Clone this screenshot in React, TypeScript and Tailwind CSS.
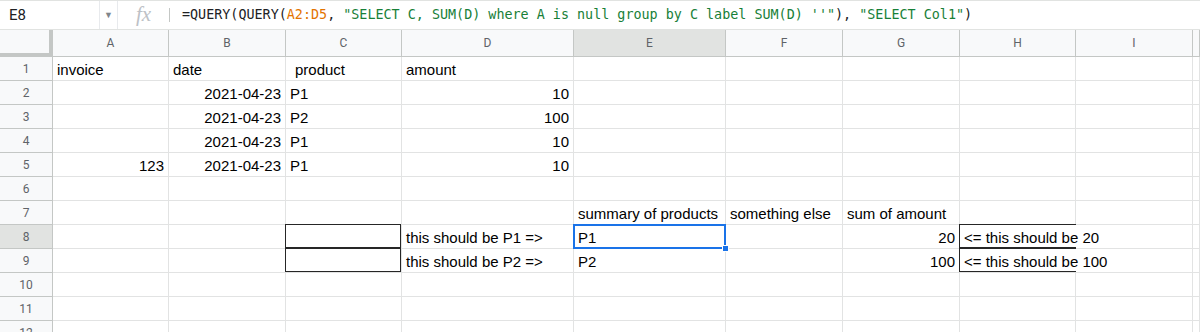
import React from 'react';

type Cell = {
  text?: string;
  right?: boolean;
  indent?: boolean;
  box?: boolean;
  openBox?: boolean;
  selected?: boolean;
};

const COLS = ['A', 'B', 'C', 'D', 'E', 'F', 'G', 'H', 'I', ''];
const DATE = '2021-04-23';

// row number -> column index -> cell
const DATA: Record<number, Record<number, Cell>> = {
  1: { 0: { text: 'invoice' }, 1: { text: 'date' }, 2: { text: 'product', indent: true }, 3: { text: 'amount' } },
  2: { 1: { text: DATE, right: true }, 2: { text: 'P1' }, 3: { text: '10', right: true } },
  3: { 1: { text: DATE, right: true }, 2: { text: 'P2' }, 3: { text: '100', right: true } },
  4: { 1: { text: DATE, right: true }, 2: { text: 'P1' }, 3: { text: '10', right: true } },
  5: { 0: { text: '123', right: true }, 1: { text: DATE, right: true }, 2: { text: 'P1' }, 3: { text: '10', right: true } },
  7: { 4: { text: 'summary of products' }, 5: { text: 'something else' }, 6: { text: 'sum of amount' } },
  8: {
    2: { box: true },
    3: { text: 'this should be P1 =>' },
    4: { text: 'P1', selected: true },
    6: { text: '20', right: true },
    7: { text: '<= this should be 20', openBox: true },
  },
  9: {
    2: { box: true },
    3: { text: 'this should be P2 =>' },
    4: { text: 'P2' },
    6: { text: '100', right: true },
    7: { text: '<= this should be 100', openBox: true },
  },
};

const ROWS = Array.from({ length: 12 }, (_, i) => i + 1);

function FormulaBar() {
  return (
    <div className="flex h-[30px] items-center border-t border-b border-[#e1e3e1] bg-white">
      <div className="flex h-full w-[100px] items-center border-r border-[#e8eaed] pl-[9px] font-['Roboto'] text-[15px] text-[#202124]">
        E8
      </div>
      <div className="flex h-full w-[18px] items-center justify-center border-r border-[#e8eaed] text-[9px] text-[#80868b]">
        ▼
      </div>
      <div className="flex h-full w-[51px] items-center justify-center font-['Liberation_Serif'] text-[21px] italic text-[#bdc1c6]">
        fx
      </div>
      <div className="h-[14px] w-px bg-[#c4c7c5]" />
      <div className="whitespace-pre pl-[12px] font-['DejaVu_Sans_Mono'] text-[13.4px] text-[#202124]">
        =QUERY(QUERY(<span className="text-[#e37400]">A2:D5</span>,{' '}
        <span className="text-[#188038]">"SELECT C, SUM(D) where A is null group by C label SUM(D) ''"</span>),{' '}
        <span className="text-[#188038]">"SELECT Col1"</span>)
      </div>
    </div>
  );
}

function DataCell({ cell }: { cell?: Cell }) {
  const noRight = cell?.openBox;
  return (
    <div
      className={`relative flex h-[24px] items-end border-b border-[#e2e3e3] pb-[2px] ${
        noRight ? '' : 'border-r'
      } ${cell?.right ? 'justify-end pr-[4px]' : cell?.indent ? 'pl-[9px]' : 'pl-[4px]'}`}
    >
      {cell?.text && (
        <span className="relative z-10 whitespace-nowrap font-['Liberation_Sans'] text-[15px] leading-[17px] text-black">
          {cell.text}
        </span>
      )}
      {cell?.box && <div className="absolute -left-px -top-px right-0 bottom-0 border border-[#262626]" />}
      {cell?.openBox && (
        <div className="absolute -left-px -top-px right-0 bottom-0 border-t border-l border-b border-[#262626]" />
      )}
      {cell?.selected && (
        <>
          <div className="absolute -left-px -top-px -right-px -bottom-px z-20 border-2 border-[#1a73e8]" />
          <div className="absolute -right-[4px] -bottom-[4px] z-30 h-[7px] w-[7px] border border-white bg-[#1a73e8]" />
        </>
      )}
    </div>
  );
}

export default function App() {
  return (
    <div className="h-[332px] w-[1200px] overflow-hidden bg-white">
      <FormulaBar />
      <div className="grid grid-cols-[53px_116px_117px_116px_172px_152px_117px_117px_116px_117px_1fr]">
        {/* header row */}
        <div className="h-[27px] border-r-4 border-b-4 border-[#c4c7c5] bg-[#f8f9fa]" />
        {COLS.map((c, i) => (
          <div
            key={`h${i}`}
            className={`flex h-[27px] items-center justify-center border-r border-b border-[#c4c7c5] font-['Roboto'] text-[12px] text-[#5f6368] ${
              c === 'E' ? 'bg-[#e1e3e1]' : 'bg-[#f8f9fa]'
            }`}
          >
            {c}
          </div>
        ))}

        {ROWS.map((r) => (
          <React.Fragment key={r}>
            <div
              className={`flex h-[24px] items-center justify-center border-r border-b border-[#c4c7c5] font-['Roboto'] text-[12px] text-[#5f6368] ${
                r === 8 ? 'bg-[#e1e3e1]' : 'bg-[#f8f9fa]'
              }`}
            >
              {r}
            </div>
            {COLS.map((_, ci) => (
              <DataCell key={`${r}-${ci}`} cell={DATA[r]?.[ci]} />
            ))}
          </React.Fragment>
        ))}
      </div>
    </div>
  );
}
